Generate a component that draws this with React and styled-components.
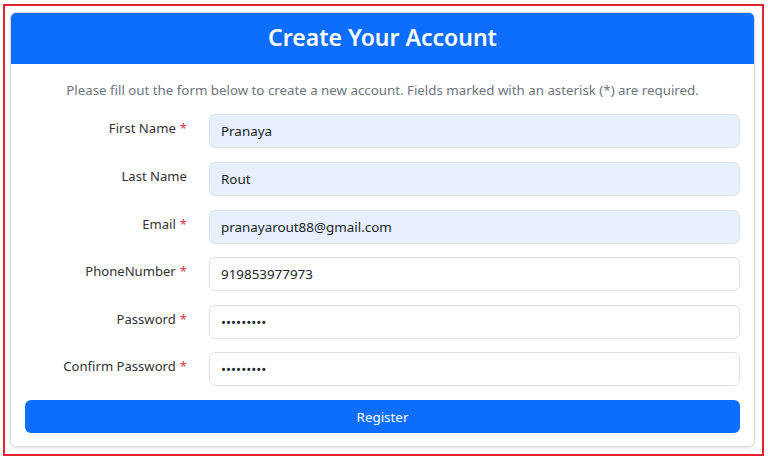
import React from 'react';
import styled, { createGlobalStyle } from 'styled-components';

const GlobalStyle = createGlobalStyle`
    * { box-sizing: border-box; }
    body {
        margin: 0;
        background: #ffffff;
        font-family: "Noto Sans", "Open Sans", Arial, sans-serif;
        color: #212529;
    }
`;

const Frame = styled.div`
    width: 761px;
    height: 452px;
    margin: 4px 0 0 3px;
    border: 2px solid #e3232c;
    padding: 6px 7px 7px 5px;
`;

const Card = styled.div`
    height: 100%;
    border: 1px solid #dcdcdc;
    border-radius: 6px;
    box-shadow: 0 1px 3px rgba(0, 0, 0, 0.12);
    overflow: hidden;
    display: flex;
    flex-direction: column;
`;

const Header = styled.div`
    height: 52px;
    padding-bottom: 3px;
    background: #0d6efd;
    display: flex;
    align-items: center;
    justify-content: center;
`;

const Title = styled.h2`
    margin: 0;
    color: #ffffff;
    font-size: 23px;
    font-weight: 600;
`;

const Body = styled.div`
    padding: 16px 14px 13px 14px;
    display: flex;
    flex-direction: column;
    gap: 13.6px;
`;

const Intro = styled.p`
    margin: 0;
    text-align: center;
    font-size: 13.3px;
    line-height: 21px;
    color: #6c757d;
`;

const Row = styled.div`
    display: grid;
    grid-template-columns: 162px 1fr;
    column-gap: 22px;
    align-items: start;
`;

const Label = styled.label`
    text-align: right;
    font-size: 13.1px;
    line-height: 21px;
    padding-top: 4px;
    color: #333;
`;

const Star = styled.span`
    color: #dc3545;
    margin-left: 4px;
`;

const Input = styled.input`
    height: 34px;
    width: 100%;
    padding: 0 11px;
    border: 1px solid #dee2e6;
    border-radius: 6px;
    background: ${props => (props.$filled ? '#e8f0fe' : '#ffffff')};
    font-family: inherit;
    font-size: 13.4px;
    color: #212529;
    outline: none;
`;

const Button = styled.button`
    height: 33px;
    width: 100%;
    border: none;
    border-radius: 6px;
    background: #0d6efd;
    color: #ffffff;
    font-family: inherit;
    font-size: 13.4px;
    cursor: pointer;
`;

const fields = [
    { label: 'First Name', value: 'Pranaya', required: true, filled: true },
    { label: 'Last Name', value: 'Rout', filled: true },
    { label: 'Email', value: 'pranayarout88@gmail.com', required: true, filled: true },
    { label: 'PhoneNumber', value: '919853977973', required: true },
    { label: 'Password', value: 'secret123', required: true, type: 'password' },
    { label: 'Confirm Password', value: 'secret123', required: true, type: 'password' },
];

const App = () => (
    <>
        <GlobalStyle />
        <Frame>
            <Card>
                <Header>
                    <Title>Create Your Account</Title>
                </Header>
                <Body>
                    <Intro>
                        Please fill out the form below to create a new account. Fields marked with an asterisk (*) are required.
                    </Intro>
                    {fields.map(field => (
                        <Row key={field.label}>
                            <Label>
                                {field.label}
                                {field.required && <Star>*</Star>}
                            </Label>
                            <Input
                                type={field.type || 'text'}
                                defaultValue={field.value}
                                $filled={field.filled}
                                readOnly
                            />
                        </Row>
                    ))}
                    <Button>Register</Button>
                </Body>
            </Card>
        </Frame>
    </>
);

export default App;
